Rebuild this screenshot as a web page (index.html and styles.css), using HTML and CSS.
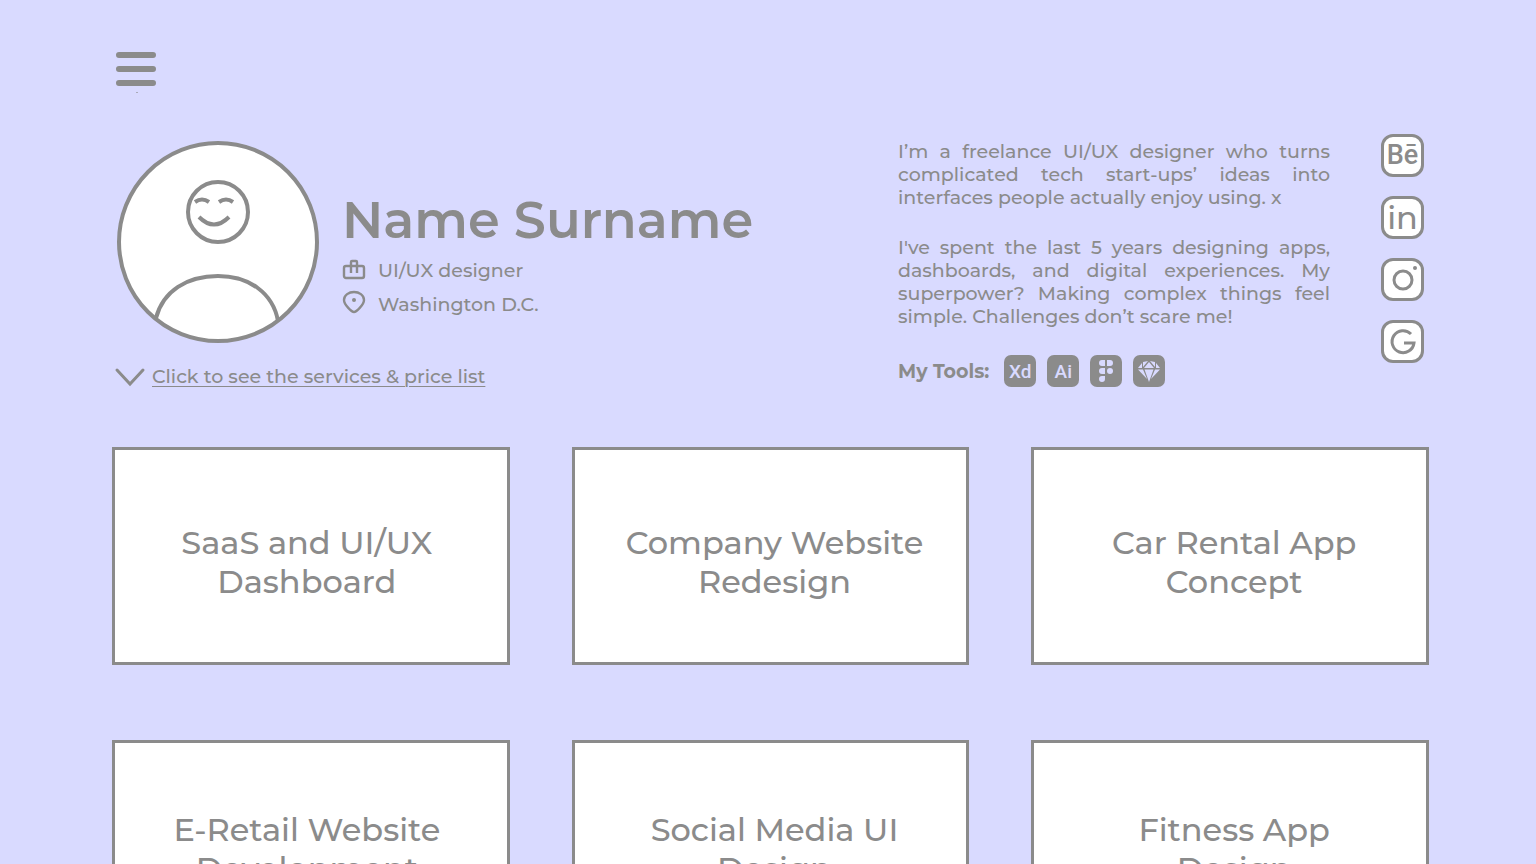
FILE: index.html
```
<!DOCTYPE html>
<html lang="en">
<head>
    <meta charset="UTF-8">
    <meta name="viewport" content="width=device-width, initial-scale=1.0">
    <title>Name Surname - Portfolio</title>
    <link rel="stylesheet" href="styles.css">
</head>
<body>
    <!-- Menu -->
    <nav class="navbar">
        <button class="menu-button" aria-label="Open menu">
            <svg width="40" height="42" viewBox="0 0 40 42">
                <path d="M3 3H37M3 17H37M3 31H37" stroke="currentColor" stroke-width="6" stroke-linecap="round"/>
                <path d="M20 40.500H22" stroke="currentColor" stroke-width="1" opacity="0.6"/>
            </svg>
        </button>
    </nav>

    <!-- Profile -->
    <header class="header">
        <div class="profile">
            <div class="identity">
                <svg class="avatar" viewBox="0 0 202 202" fill="none" stroke="currentColor" stroke-width="4">
                    <circle cx="101" cy="101" r="99" fill="#fff"/>
                    <circle cx="101" cy="71" r="30"/>
                    <path d="M78 61Q85 56 92 61M102 61Q109 56 116 61M82 76Q97 91 112 76"/>
                    <path d="M39 177C46 150 70 135 101 135C132 135 156 152 161 180"/>
                </svg>
                <div class="details">
                    <h1>Name Surname</h1>
                    <p class="detail">
                        <svg width="24" height="24" viewBox="0 0 24 24" fill="none" stroke="currentColor" stroke-width="2.400">
                            <rect x="2" y="8" width="20" height="12" rx="2"/>
                            <path d="M9 15V4Q9 3 10 3H14Q15 3 15 4V15"/>
                        </svg>
                        UI/UX designer
                    </p>
                    <p class="detail">
                        <svg width="24" height="24" viewBox="0 0 24 24" fill="none" stroke="currentColor" stroke-width="2.400">
                            <path d="M12 20C10 20 2 13 2 8C2 3 7 0 12 0C17 0 22 3 22 8C22 13 14 20 12 20Z"/>
                            <circle cx="12" cy="8" r="2" fill="currentColor" stroke="none"/>
                        </svg>
                        Washington D.C.
                    </p>
                </div>
            </div>
            <a class="services" href="#services">
                <svg width="30" height="18" viewBox="0 0 30 18" fill="none" stroke="currentColor" stroke-width="3" stroke-linecap="round">
                    <path d="M2 2L15 16L28 2"/>
                </svg>
                <span>Click to see the services &amp; price list</span>
            </a>
        </div>

        <div class="about">
            <p>I’m a freelance UI/UX designer who turns complicated tech start-ups’ ideas into interfaces people actually enjoy using. x</p>
            <p>I've spent the last 5 years designing apps, dashboards, and digital experiences. My superpower? Making complex things feel simple. Challenges don’t scare me!</p>
            <div class="tools">
                <strong>My Tools:</strong>
                <span class="tool">Xd</span>
                <span class="tool">Ai</span>
                <span class="tool">
                    <svg width="32" height="32" viewBox="0 0 32 32" fill="currentColor">
                        <path d="M15 5H12A3 3 0 0 0 12 11H15ZM17 5H20A3 3 0 0 1 20 11H17ZM15 13H12A3 3 0 0 0 12 19H15ZM15 21H12A3 3 0 1 0 15 24Z"/>
                        <circle cx="20" cy="16" r="3"/>
                    </svg>
                </span>
                <span class="tool">
                    <svg width="32" height="32" viewBox="0 0 32 32" fill="currentColor">
                        <path d="M10 7L15 6L10 12ZM17 6L22 7L22 12ZM16 7L21 13H11ZM9 8V13H5ZM23 8L27 13H23ZM5 14.500H10L14 24ZM11.500 14.500H20.500L16 27ZM22 14.500H27L18 24Z"/>
                    </svg>
                </span>
            </div>
        </div>

        <div class="social-icons">
            <a href="#behance" aria-label="Behance"><span class="behance">Bē</span></a>
            <a href="#linkedin" aria-label="LinkedIn"><span class="linkedin">in</span></a>
            <a href="#instagram" aria-label="Instagram">
                <svg width="37" height="37" viewBox="0 0 37 37" fill="none" stroke="currentColor" stroke-width="3">
                    <circle cx="19" cy="19" r="9"/>
                    <circle cx="31" cy="7" r="2" fill="currentColor" stroke="none"/>
                </svg>
            </a>
            <a href="#google" aria-label="Google">
                <svg width="37" height="37" viewBox="0 0 37 37" fill="none" stroke="currentColor" stroke-width="3">
                    <path d="M27 11A11 11 0 1 0 30 20H20"/>
                </svg>
            </a>
        </div>
    </header>

    <!-- Projects -->
    <main class="projects">
        <a class="card" href="#saas"><h2>SaaS and UI/UX<br>Dashboard</h2></a>
        <a class="card" href="#company"><h2>Company Website<br>Redesign</h2></a>
        <a class="card" href="#rental"><h2>Car Rental App<br>Concept</h2></a>
        <a class="card" href="#retail"><h2>E-Retail Website<br>Development</h2></a>
        <a class="card" href="#social"><h2>Social Media UI<br>Design</h2></a>
        <a class="card" href="#fitness"><h2>Fitness App<br>Design</h2></a>
    </main>
</body>
</html>
```
FILE: styles.css
```
* {
    box-sizing: border-box;
}

body {
    font-family: Montserrat, Inter, sans-serif;
    font-size: 19px;
    font-weight: 500;
    line-height: 23px;
    margin: 0;
    padding: 52px 107px 60px 112px;
    background-color: #d9daff;
    color: #8b8b8b;
}

h1, h2, p {
    margin: 0;
}

a {
    color: inherit;
    text-decoration: none;
}

svg {
    display: block;
    flex-shrink: 0;
    overflow: visible;
}

/* Menu */
.navbar {
    padding: 0 4px;
}

.menu-button {
    display: block;
    padding: 0;
    border: none;
    background: none;
    color: inherit;
    cursor: pointer;
}

/* Profile */
.header {
    display: grid;
    grid-template-columns: 1fr 432px 43px;
    column-gap: 51px;
    align-items: start;
    padding: 40px 5px 0 3px;
}

.profile {
    padding-top: 7px;
}

.identity {
    display: flex;
    gap: 23px;
    padding-left: 2px;
}

.avatar {
    width: 202px;
    height: 202px;
}

.details {
    padding-top: 49px;
}

.details h1 {
    font-size: 51px;
    font-weight: 600;
    line-height: 60px;
    margin-bottom: 8px;
    white-space: nowrap;
}

.detail {
    display: flex;
    align-items: center;
    gap: 12px;
    margin-bottom: 10px;
}

.services {
    display: inline-flex;
    align-items: center;
    gap: 7px;
    margin-top: 22px;
}

.services span {
    text-decoration: underline;
    text-decoration-thickness: 1px;
    text-underline-offset: 3px;
}

/* About */
.about {
    padding-top: 6px;
}

.about p {
    text-align: justify;
    margin-bottom: 27px;
}

.tools {
    display: flex;
    align-items: center;
    gap: 11px;
}

.tools strong {
    font-weight: 700;
    margin-right: 4px;
}

.tool {
    display: flex;
    align-items: center;
    justify-content: center;
    width: 32px;
    height: 32px;
    border-radius: 7px;
    background-color: #8b8b8b;
    color: #d9daff;
    font-family: Roboto, sans-serif;
    font-size: 19px;
    font-weight: 500;
}

/* Social icons */
.social-icons {
    display: flex;
    flex-direction: column;
    gap: 19px;
}

.social-icons a {
    display: flex;
    align-items: center;
    justify-content: center;
    width: 43px;
    height: 43px;
    border: 3px solid #8b8b8b;
    border-radius: 12px;
    background-color: #fff;
}

.behance {
    font-family: Roboto, sans-serif;
    font-size: 27px;
    font-weight: 500;
}

.linkedin {
    font-size: 32px;
}

/* Projects */
.projects {
    display: grid;
    grid-template-columns: repeat(3, 1fr);
    gap: 75px 62px;
    margin-top: 56px;
}

.card {
    display: flex;
    align-items: center;
    justify-content: center;
    min-height: 218px;
    padding: 12px 0 0 8px;
    border: 3px solid #8b8b8b;
    background-color: #fff;
    text-align: center;
}

.card:nth-child(3n + 1) {
    padding-left: 0;
    padding-right: 8px;
}

.card:nth-child(n + 4) {
    padding-top: 0;
}

.card h2 {
    font-size: 32px;
    font-weight: 500;
    line-height: 39px;
}
```
